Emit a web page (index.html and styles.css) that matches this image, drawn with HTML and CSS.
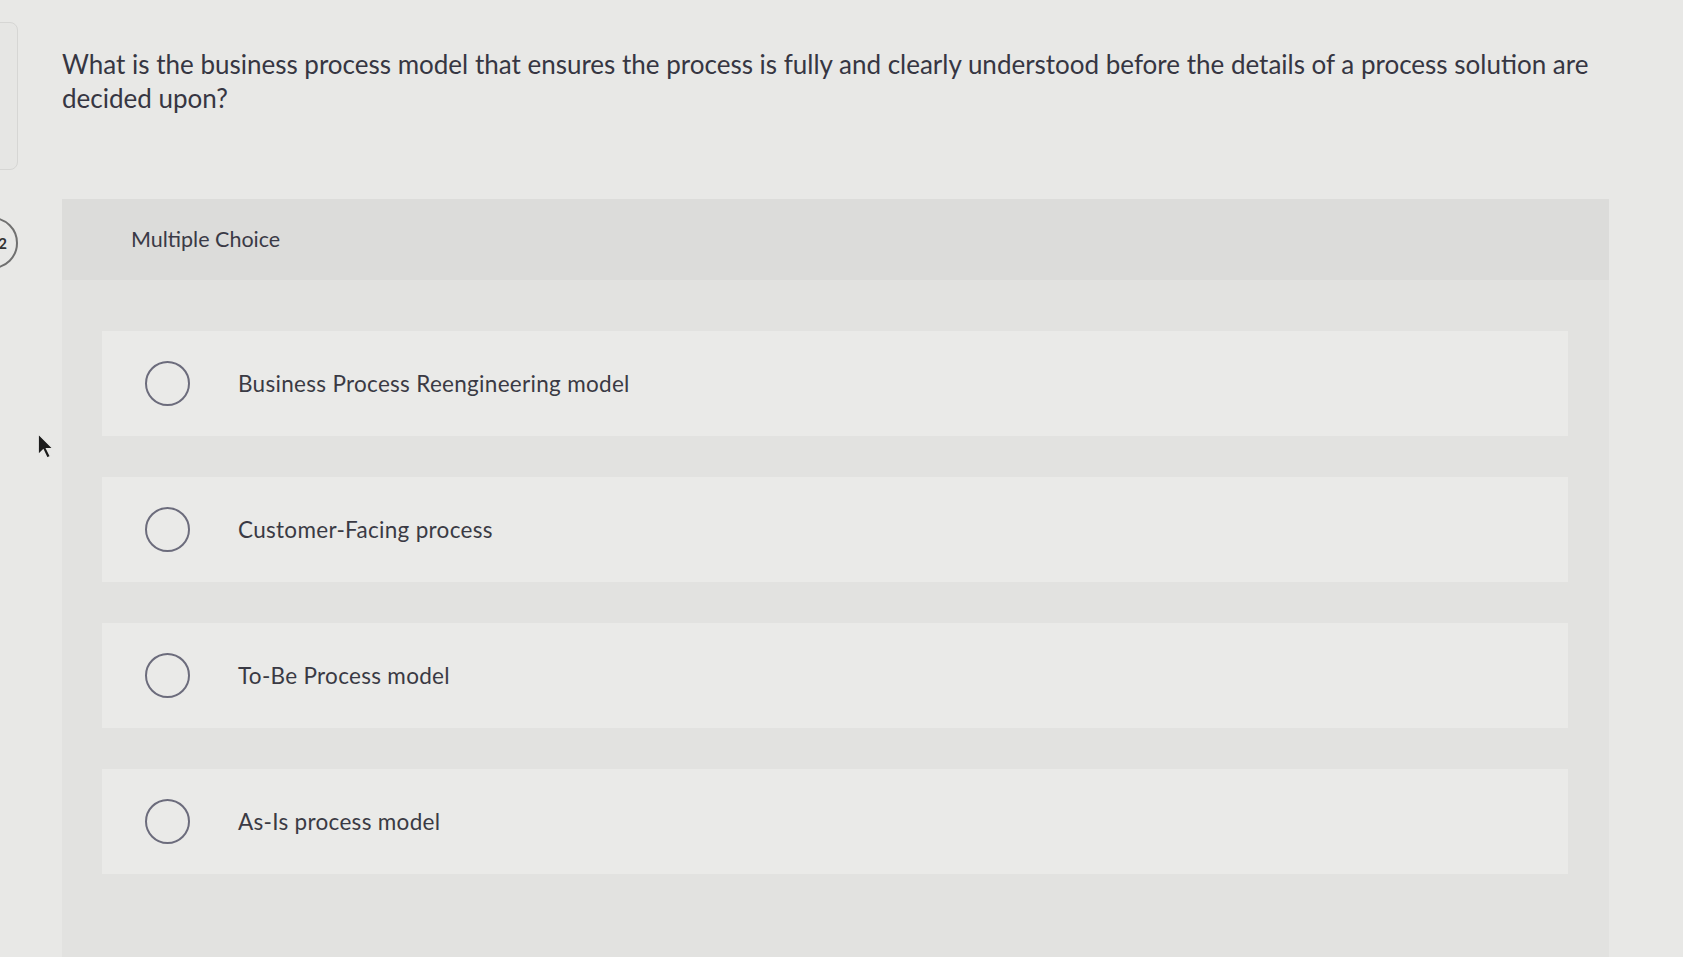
FILE: index.html
```html
<!DOCTYPE html>
<html lang="en">
<head>
<meta charset="utf-8">
<title>Multiple Choice</title>
<link rel="stylesheet" href="styles.css">
</head>
<body>
<div class="side-tab"></div>
<div class="side-badge"><span>2</span></div>
<svg class="cursor" width="20" height="30" viewBox="0 0 18 26"><path d="M2 1 L2 20 L6.5 15.5 L10 23 L13 21.5 L9.5 14.5 L15.5 14.5 Z" fill="#1c1c1c" stroke="#e8e8e6" stroke-width="1.2"/></svg>
<main class="page">
  <p class="question">What is the business process model that ensures the process is fully and clearly understood before the details of a process solution are decided upon?</p>
  <section class="panel">
    <div class="panel-head">Multiple Choice</div>
    <div class="panel-body">
      <label class="option"><span class="radio"></span><span class="opt-text">Business Process Reengineering model</span></label>
      <label class="option"><span class="radio"></span><span class="opt-text">Customer-Facing process</span></label>
      <label class="option"><span class="radio"></span><span class="opt-text">To-Be Process model</span></label>
      <label class="option"><span class="radio"></span><span class="opt-text">As-Is process model</span></label>
    </div>
  </section>
</main>
</body>
</html>
```

FILE: styles.css
```css
html, body {
  margin: 0;
  padding: 0;
  height: 100%;
  overflow: hidden;
}
body {
  background: #e8e8e6;
  font-family: Lato, "Noto Sans", Arial, sans-serif;
  color: #3a3a46;
  position: relative;
}
.side-tab {
  position: absolute;
  left: -20px;
  top: 22px;
  width: 36px;
  height: 146px;
  border: 1px solid #d6d6d4;
  border-radius: 8px;
  background: #e6e6e4;
}
.side-badge {
  position: absolute;
  left: -34px;
  top: 217px;
  width: 48px;
  height: 48px;
  border: 2px solid #707070;
  border-radius: 50%;
  display: flex;
  align-items: center;
  justify-content: flex-end;
  font-size: 15px;
  font-weight: 700;
  color: #333;
}
.side-badge span {
  margin-right: 9px;
}
.cursor {
  position: absolute;
  left: 36px;
  top: 432px;
}
.page {
  padding: 47px 0 0 62px;
}
.question {
  margin: 0;
  width: 1550px;
  font-size: 26px;
  line-height: 34px;
  color: #363642;
}
.panel {
  margin-top: 84px;
  width: 1547px;
  height: 800px;
  background: #e2e2e0;
}
.panel-head {
  height: 81px;
  background: #dcdcda;
  padding-left: 69px;
  display: flex;
  align-items: center;
  font-size: 21.5px;
  color: #3a3a46;
  box-sizing: border-box;
  padding-bottom: 2px;
}
.panel-body {
  padding: 51px 41px 0 40px;
  display: flex;
  flex-direction: column;
  gap: 41px;
}
.option {
  height: 105px;
  background: #eaeae8;
  display: flex;
  align-items: center;
  padding-left: 43px;
  box-sizing: border-box;
}
.radio {
  width: 45px;
  height: 45px;
  border: 2px solid #6c6c7c;
  border-radius: 50%;
  box-sizing: border-box;
  flex: none;
}
.opt-text {
  margin-left: 48px;
  font-size: 22.5px;
  letter-spacing: 0.3px;
  color: #3a3a44;
}
```
